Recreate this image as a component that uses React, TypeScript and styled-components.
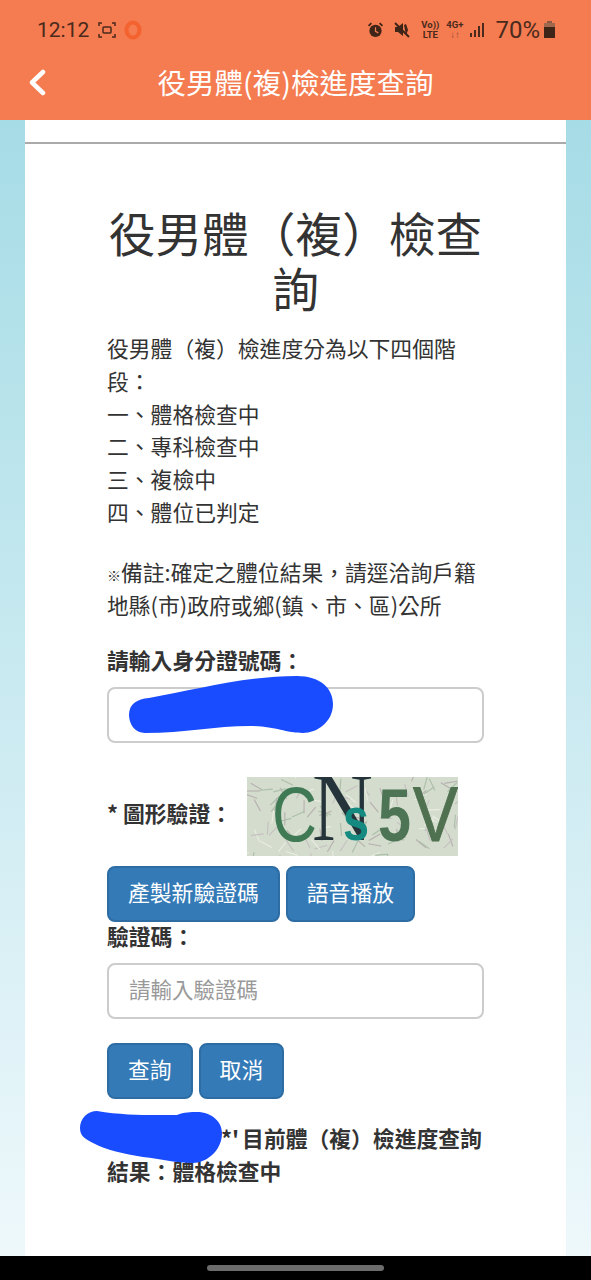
import React from "react";
import styled, { createGlobalStyle } from "styled-components";

const CJK = `"Noto Sans CJK TC", "Noto Sans", sans-serif`;

const Global = createGlobalStyle`
  html, body { margin: 0; padding: 0; background: #000; }
  * { box-sizing: border-box; }
  body { font-family: ${CJK}; }
`;

const Screen = styled.div`
  width: 591px; height: 1280px; overflow: hidden; display: flex; flex-direction: column;
  position: relative;
`;
const Header = styled.header`
  height: 120px; background: #f57b50; display: flex; flex-direction: column; flex: none;
`;
const StatusBar = styled.div`
  height: 59px; padding: 0 36px 0 37px; display: flex; align-items: center; justify-content: space-between;
  color: #4a2a1c; font-family: Roboto, sans-serif;
`;
const StatusGroup = styled.div`
  display: flex; align-items: center; gap: ${(p: { $gap: number }) => p.$gap}px;
`;
const Clock = styled.span` font-size: 21px; `;
const Percent = styled.span` font-size: 24px; margin-left: 3px; `;
const NetBlock = styled.div` margin-left: ${(p: { $left: number }) => p.$left}px; `;
const NetText = styled.span`
  display: block; font-size: 9.5px; line-height: 9.5px; font-weight: 700; text-align: center;
  color: ${(p: { $dim?: boolean }) => (p.$dim ? "#8a5238" : "#4a2a1c")};
`;
const TitleBar = styled.div`
  flex: 1; display: flex; align-items: center; justify-content: center; position: relative; padding-bottom: 16px;
`;
const Back = styled.svg`
  position: absolute; left: 28px; top: 10px;
`;
const BarTitle = styled.h1`
  margin: 0; color: #fff; font-weight: 400; font-size: 28.5px; line-height: 36px; font-family: ${CJK};
`;
const Body = styled.main`
  flex: 1; padding: 0 25px; min-height: 0;
  background: linear-gradient(180deg, #a6dce6 0%, #dff2f7 80%, #eef8fb 100%);
`;
const Card = styled.section`
  height: 100%; background: #fff; padding-top: 22px; position: relative;
`;
const Rule = styled.hr`
  margin: 0; border: 0; height: 2px; background: #aaaaaa;
`;
const Content = styled.div`
  padding: 0 82px; color: #333;
`;
const Title = styled.h2`
  margin: 60px 0 0; font-weight: 400; font-size: 46.7px; line-height: 55px; text-align: center; color: #333;
`;
const Para = styled.p`
  margin: ${(p: { $top: number }) => p.$top}px 0 0; font-size: 21.8px; line-height: 32.8px; color: #333;
`;
const Ref = styled.span` font-size: 14px; line-height: 0; font-weight: 700; `;
const Label = styled.label`
  display: block; font-weight: 700; font-size: 21.8px; line-height: 33px; color: #333;
  margin-top: ${(p: { $top: number }) => p.$top}px;
`;
const Field = styled.div`
  height: 56px; border: 2px solid #ccc; border-radius: 8px; background: #fff; margin-top: ${(p: { $top: number }) => p.$top}px;
  padding: 0 20px 5px; display: flex; align-items: center; font-size: 21.5px; color: #999;
`;
const CaptchaRow = styled.div`
  display: flex; align-items: center; gap: 15px; margin-top: 34px; height: 79px;
`;
const CaptchaLabel = styled.span`
  font-weight: 700; font-size: 21.8px; line-height: 33px; color: #333; padding-bottom: 8px;
`;
const Buttons = styled.div`
  display: flex; gap: 6px; margin-top: ${(p: { $top: number }) => p.$top}px;
`;
const Button = styled.button`
  height: 56px; padding: 0 19px 5px; background: #337ab7; border: 2px solid #2e6da4; border-radius: 8px;
  color: #fff; font-size: 21.8px; font-family: ${CJK}; line-height: 33px;
`;
const Result = styled.p`
  margin: 22px 0 0; font-weight: 700; font-size: 21.8px; line-height: 33px; color: #333;
  text-indent: 114px; width: 385px; word-spacing: -2px;
`;
const Scribble = styled.svg`
  position: absolute; left: ${(p: { $x: number }) => p.$x}px; top: ${(p: { $y: number }) => p.$y}px;
`;
const NavBar = styled.div`
  height: 24px; flex: none; background: #000; display: flex; justify-content: center; padding-top: 9px;
`;
const NavPill = styled.div`
  width: 177px; height: 6px; border-radius: 3px; background: #6c6c6c;
`;

const noiseColors = ["#b3a9ac", "#eff1e7", "#a6baa3", "#c4bcc0"];
const noise = Array.from({ length: 110 }, (_, i) => {
  const x = (i * 37.3 + Math.sin(i) * 20 + 211) % 211;
  const y = (i * 53.7 + Math.cos(i * 1.7) * 14 + 79) % 79;
  const a = i * 2.4;
  return {
    d: `M${x.toFixed(1)} ${y.toFixed(1)} l${(Math.cos(a) * 13).toFixed(1)} ${(Math.sin(a) * 13).toFixed(1)}`,
    c: noiseColors[i % 4],
  };
});

const Captcha = () => (
  <svg width="211" height="79" viewBox="0 0 211 79" style={{ display: "block", flex: "none" }}>
    <rect width="211" height="79" fill="#d3dccd" />
    <g fill="none" strokeWidth="1.1" opacity="0.85">
      {noise.map((n, i) => (
        <path key={i} d={n.d} stroke={n.c} />
      ))}
    </g>
    <text x="25" y="64" fontFamily="'Liberation Sans', sans-serif" fontSize="77" fill="#3f7a55" textLength="45" lengthAdjust="spacingAndGlyphs">C</text>
    <text x="65" y="63" fontFamily="'Liberation Serif', serif" fontSize="98" fill="#24343a" textLength="61" lengthAdjust="spacingAndGlyphs">N</text>
    <text x="96" y="63" fontFamily="'Liberation Sans', sans-serif" fontWeight="700" fontSize="62" fill="#158a80" textLength="26" lengthAdjust="spacingAndGlyphs">s</text>
    <text x="131" y="64" fontFamily="'Liberation Sans', sans-serif" fontWeight="700" fontSize="75" fill="#4d7455" textLength="33" lengthAdjust="spacingAndGlyphs">5</text>
    <text x="166" y="64" fontFamily="'Liberation Sans', sans-serif" fontSize="77" fill="#4f7150" stroke="#4f7150" strokeWidth="1" textLength="45" lengthAdjust="spacingAndGlyphs">V</text>
  </svg>
);

export default function App() {
  return (
    <Screen>
      <Global />
      <Header>
        <StatusBar>
          <StatusGroup $gap={9}>
            <Clock>12:12</Clock>
            <svg width="18" height="16" viewBox="0 0 18 16" fill="none" stroke="#4a2a1c" strokeWidth="1.5">
              <path d="M1 4V1h3M14 1h3v3M1 12v3h3M14 15h3v-3" />
              <rect x="5" y="5" width="8" height="6" rx="1" />
            </svg>
            <svg width="20" height="20" viewBox="0 0 20 20" fill="none" stroke="#f4622f" strokeWidth="4" style={{ marginLeft: -2 }}>
              <ellipse cx="10" cy="10" rx="6.5" ry="7.5" />
            </svg>
          </StatusGroup>
          <StatusGroup $gap={7}>
            <svg width="17" height="18" viewBox="0 0 18 18" fill="#3f2418">
              <circle cx="9" cy="10" r="6.5" />
              <path d="M1 4l3-3 1.3 1.3-3 3zM17 4l-3-3-1.3 1.3 3 3z" />
              <path d="M9 6v4.5l3 1.5" stroke="#f57b50" strokeWidth="1.3" fill="none" />
            </svg>
            <svg width="18" height="18" viewBox="0 0 18 18" fill="#3f2418" style={{ marginLeft: 2 }}>
              <path d="M2 6h3l5-4v13l-5-4H2z" />
              <path d="M2 2l14 14" stroke="#3f2418" strokeWidth="2" />
              <path d="M11 4l2-1 2 6-2 5z" />
            </svg>
            <NetBlock $left={3}>
              <NetText>Vo))</NetText>
              <NetText>LTE</NetText>
            </NetBlock>
            <NetBlock $left={0}>
              <NetText>4G+</NetText>
              <NetText $dim>↓↑</NetText>
            </NetBlock>
            <svg width="15" height="16" viewBox="0 0 15 16" fill="#4a2a1c">
              <rect x="0" y="11" width="2" height="4" />
              <rect x="4" y="8" width="2" height="7" />
              <rect x="8" y="4" width="2" height="11" />
              <rect x="12" y="1" width="2" height="14" />
            </svg>
            <Percent>70%</Percent>
            <svg width="11" height="17" viewBox="0 0 11 17" style={{ marginLeft: -3 }}>
              <rect x="3" y="0" width="5" height="2" fill="#8a5a42" />
              <rect x="0" y="2" width="11" height="4" fill="#a0684c" />
              <rect x="0" y="6" width="11" height="11" fill="#3f2418" />
            </svg>
          </StatusGroup>
        </StatusBar>
        <TitleBar>
          <Back width="20" height="28" viewBox="0 0 20 28" fill="none" stroke="#fff" strokeWidth="4.5" strokeLinecap="round" strokeLinejoin="round">
            <path d="M15 3L4 13.5 15 24" />
          </Back>
          <BarTitle>役男體(複)檢進度查詢</BarTitle>
        </TitleBar>
      </Header>
      <Body>
        <Card>
          <Rule />
          <Content>
            <Title>役男體（複）檢查詢</Title>
            <Para $top={18}>
              役男體（複）檢進度分為以下四個階段：
              <br />一、體格檢查中
              <br />二、專科檢查中
              <br />三、複檢中
              <br />四、體位已判定
            </Para>
            <Para $top={27}>
              <Ref>※</Ref>備註:確定之體位結果，請逕洽詢戶籍
              <br />
              地縣(市)政府或鄉(鎮、市、區)公所
            </Para>
            <Label $top={22}>請輸入身分證號碼：</Label>
            <Field $top={11} />
            <CaptchaRow>
              <CaptchaLabel>* 圖形驗證：</CaptchaLabel>
              <Captcha />
            </CaptchaRow>
            <Buttons $top={10}>
              <Button>產製新驗證碼</Button>
              <Button>語音播放</Button>
            </Buttons>
            <Label $top={-3}>驗證碼：</Label>
            <Field $top={11}>請輸入驗證碼</Field>
            <Buttons $top={24}>
              <Button>查詢</Button>
              <Button>取消</Button>
            </Buttons>
            <Result>*' 目前體（複）檢進度查詢結果：體格檢查中</Result>
          </Content>
          <Scribble $x={100} $y={552} width="214" height="66" viewBox="0 0 214 66">
            <path d="M4 43C4 32 12 27 24 26C70 18 120 4 172 4C195 4 208 16 208 32C208 50 192 61 178 61C160 61 150 54 125 54C90 54 60 61 20 61C10 61 4 52 4 43Z" fill="#1a4cff" />
          </Scribble>
          <Scribble $x={51} $y={986} width="150" height="62" viewBox="0 0 150 62">
            <path d="M4 22C4 12 12 5 21 5C50 10 80 9 101 9C108 6 115 6 121 6C136 6 146 16 146 27C146 45 130 57 117 57C100 57 85 53 67 51C48 48 30 44 17 37C9 33 4 30 4 22Z" fill="#1a4cff" />
          </Scribble>
        </Card>
      </Body>
      <NavBar>
        <NavPill />
      </NavBar>
    </Screen>
  );
}
